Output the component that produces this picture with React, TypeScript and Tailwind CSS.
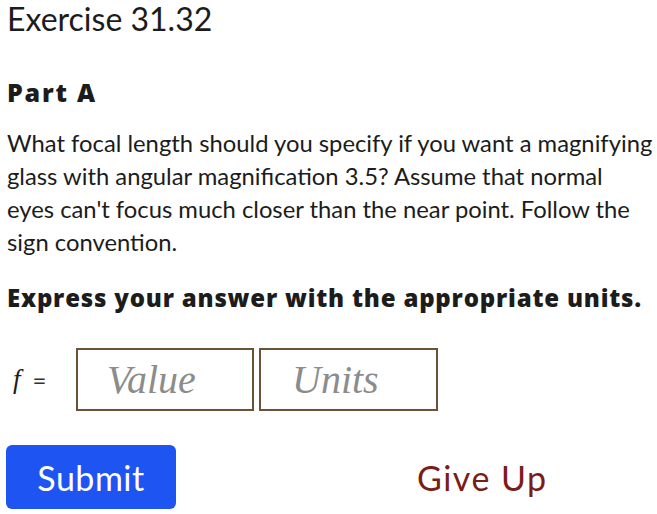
import React from "react";

const sans = { fontFamily: "Lato, 'Open Sans', sans-serif" };
const heavy = { fontFamily: "'Open Sans', Lato, sans-serif" };
const serif = { fontFamily: "'Liberation Serif', 'Times New Roman', serif" };

export default function App() {
  return (
    <div className="w-[657px] h-[514px] bg-white text-[#1c1c1c] overflow-hidden" style={sans}>
      <div className="pl-[7px]">
        <h1 className="text-[32px] leading-[38px] font-normal">Exercise 31.32</h1>
        <h2 className="mt-[39px] text-[25px] leading-[30px] font-extrabold tracking-[1.8px]" style={heavy}>
          Part A
        </h2>
        <p className="mt-[20px] text-[23.8px] leading-[33px]">
          What focal length should you specify if you want a magnifying
          <br />
          glass with angular magnification 3.5? Assume that normal
          <br />
          eyes can't focus much closer than the near point. Follow the
          <br />
          sign convention.
        </p>
        <p className="mt-[22px] text-[24px] leading-[33px] font-extrabold tracking-[0.8px]" style={heavy}>
          Express your answer with the appropriate units.
        </p>
      </div>

      <div className="mt-[34px] flex items-center">
        <div className="w-[76px] flex items-center pl-[13px]">
          <span className="text-[27px] italic leading-none" style={serif}>f</span>
          <span className="text-[24px] ml-[12px] leading-none text-[#333]">=</span>
        </div>
        <div className="w-[178px] h-[63px] border-2 border-[#6b5335] flex items-center pl-[29px]">
          <span className="text-[40px] italic text-[#8c8c8c] leading-none" style={serif}>Value</span>
        </div>
        <div className="ml-[5px] w-[179px] h-[63px] border-2 border-[#6b5335] flex items-center pl-[31px]">
          <span className="text-[40px] italic text-[#8c8c8c] leading-none" style={serif}>Units</span>
        </div>
      </div>

      <div className="mt-[34px] flex items-center">
        <button className="ml-[6px] w-[170px] h-[64px] rounded-[6px] bg-[#1e55f2] text-white text-[34px] tracking-[0.5px]">
          Submit
        </button>
        <span className="ml-[241px] text-[34px] tracking-[1.5px] text-[#7a1d17]">Give Up</span>
      </div>
    </div>
  );
}
